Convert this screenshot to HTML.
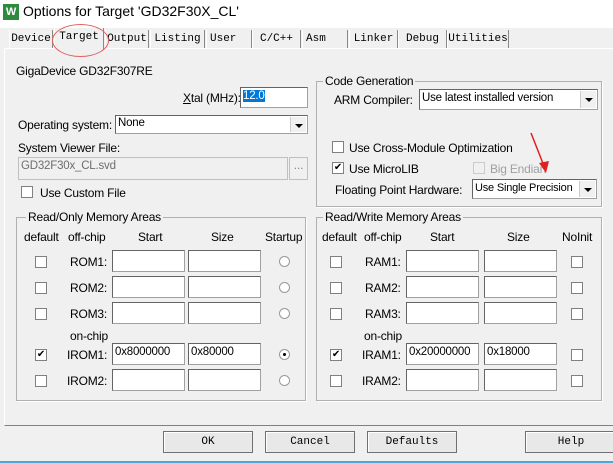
<!DOCTYPE html><html><head><style>
*{box-sizing:border-box;margin:0;padding:0}
body{width:613px;height:463px;background:#f0f0f0;position:relative;overflow:hidden;font:12px "Liberation Sans",sans-serif;color:#000;letter-spacing:-0.2px}
.a{position:absolute;white-space:nowrap}
.t{position:absolute;top:30px;height:18px;font:11px "Liberation Mono",monospace;padding:3px 0 0;text-align:center;border-left:1px solid #fff;border-right:1px solid #888;letter-spacing:0;overflow:hidden}
.in{position:absolute;height:22px;background:#fff;border:1px solid #a0a0a0;border-top-color:#646464;border-left-color:#646464;padding:2px 2px;font-size:11.5px;overflow:hidden;white-space:nowrap}
.cb{position:absolute;width:12px;height:12px;background:#fff;border:1px solid #808080;font-size:10px;line-height:10px;text-align:center}
.rd{position:absolute;width:11px;height:11px;border-radius:50%;background:#fff;border:1px solid #999}
.gb{position:absolute;border:1px solid #b0b0b0;box-shadow:1px 1px 0 #fff}
.gl{position:absolute;background:#f0f0f0;padding:0 2px}
.dd{position:absolute;top:1px;right:1px;width:16px;bottom:1px;background:#f0f0f0;border-left:1px solid #ccc}
.dd:after{content:"";position:absolute;left:4px;top:7px;border:4px solid transparent;border-top:4px solid #000}
.bt{position:absolute;top:431px;height:22px;width:90px;border:1px solid #707070;background:#e8e8e8;font:11px "Liberation Mono",monospace;text-align:center;line-height:20px;box-shadow:inset 1px 1px #fff;letter-spacing:0}
</style></head><body>
<div class="a" style="left:0;top:0;width:613px;height:28px;background:#fff"></div>
<div class="a" style="left:3px;top:4px;width:16px;height:16px;background:#2e8b3e;color:#fff;font:bold 11px sans-serif;text-align:center;line-height:16px">W</div>
<div class="a" style="left:23px;top:3px;font-size:14px;letter-spacing:0">Options for Target 'GD32F30X_CL'</div>
<div class="a" style="left:4px;top:48px;width:610px;height:378px;border:1px solid #fff;border-right:none;border-bottom:1px solid #808080"></div>
<div class="t" style="left:9px;width:44px">Device</div>
<div class="t" style="left:54px;top:28px;height:21px;width:50px;background:#f0f0f0">Target</div>
<div class="t" style="left:105px;width:44px">Output</div>
<div class="t" style="left:150px;width:55px">Listing</div>
<div class="t" style="left:206px;width:46px;text-align:left;padding-left:3px">User</div>
<div class="t" style="left:252px;width:49px">C/C++</div>
<div class="t" style="left:302px;width:46px;text-align:left;padding-left:3px">Asm</div>
<div class="t" style="left:349px;width:49px">Linker</div>
<div class="t" style="left:398px;width:49px">Debug</div>
<div class="t" style="left:447px;width:62px">Utilities</div>
<div class="a" style="left:52px;top:24px;width:57px;height:33px;border:1px solid #e06060;border-radius:50%"></div>

<div class="a" style="left:16px;top:64px">GigaDevice GD32F307RE</div>
<div class="a" style="left:183px;top:91px"><u>X</u>tal (MHz):</div>
<div class="in" style="left:240px;top:87px;width:68px;height:21px"><span style="background:#0078d7;color:#fff">12.0</span></div>
<div class="a" style="left:18px;top:118px">Operating system:</div>
<div class="in" style="left:115px;top:115px;width:193px;height:19px;padding-top:1px">None<div class="dd"></div></div>
<div class="a" style="left:18px;top:141px">System Viewer File:</div>
<div class="in" style="left:18px;top:157px;width:270px;height:23px;background:#f0f0f0;color:#6d6d6d;border-color:#c0c0c0">GD32F30x_CL.svd</div>
<div class="a" style="left:289px;top:157px;width:19px;height:23px;border:1px solid #c0c0c0;color:#888;text-align:center">...</div>
<div class="cb" style="left:21px;top:186px"></div>
<div class="a" style="left:40px;top:186px">Use Custom File</div>

<div class="gb" style="left:16px;top:217px;width:290px;height:184px"></div>
<div class="gl" style="left:26px;top:210px">Read/Only Memory Areas</div>
<div class="a" style="left:24px;top:230px">default</div><div class="a" style="left:68px;top:230px">off-chip</div>
<div class="a" style="left:138px;top:230px">Start</div><div class="a" style="left:211px;top:230px">Size</div><div class="a" style="left:265px;top:230px">Startup</div>

<div class="gb" style="left:316px;top:217px;width:286px;height:184px"></div>
<div class="gl" style="left:323px;top:210px">Read/Write Memory Areas</div>
<div class="a" style="left:322px;top:230px">default</div><div class="a" style="left:364px;top:230px">off-chip</div>
<div class="a" style="left:430px;top:230px">Start</div><div class="a" style="left:507px;top:230px">Size</div><div class="a" style="left:562px;top:230px">NoInit</div>

<div class="a" style="left:70px;top:329px">on-chip</div>
<div class="a" style="left:364px;top:329px">on-chip</div>

<div class="gb" style="left:316px;top:81px;width:286px;height:126px"></div>
<div class="gl" style="left:323px;top:74px">Code Generation</div>
<div class="a" style="left:334px;top:93px">ARM Compiler:</div>
<div class="in" style="left:419px;top:89px;width:179px;height:21px">Use latest installed version<div class="dd"></div></div>
<div class="cb" style="left:332px;top:141px"></div><div class="a" style="left:349px;top:141px">Use Cross-Module Optimization</div>
<div class="cb" style="left:332px;top:162px">✔</div><div class="a" style="left:349px;top:162px">Use MicroLIB</div>
<div class="cb" style="left:473px;top:162px;border-color:#ccc;background:#f0f0f0"></div><div class="a" style="left:490px;top:162px;color:#a0a0a0">Big Endian</div>
<div class="a" style="left:335px;top:183px">Floating Point Hardware:</div>
<div class="in" style="left:472px;top:179px;width:125px;height:20px;padding-top:2px;font-size:11px">Use Single Precision<div class="dd"></div></div>
<svg class="a" style="left:520px;top:130px" width="40" height="45"><line x1="11" y1="3" x2="24" y2="36" stroke="#e02020" stroke-width="1.5"/><polygon points="19,33 29,31 26,43" fill="#e02020"/></svg>

<div id="rows"></div>
<script>
var r=[["ROM1","RAM1",250,"",""],["ROM2","RAM2",276,"",""],["ROM3","RAM3",302,"",""],["IROM1","IRAM1",343,"0x8000000","0x80000","0x20000000","0x18000"],["IROM2","IRAM2",369,"",""]],h="";
r.forEach(function(e,i){var y=e[2],ck=i==3?"✔":"";
h+='<div class="cb" style="left:35px;top:'+(y+6)+'px">'+ck+'</div>';
h+='<div class="a" style="left:'+(e[0].length>4?67:70)+'px;top:'+(y+5)+'px">'+e[0]+':</div>';
h+='<div class="in" style="left:112px;top:'+y+'px;width:73px">'+(e[3]||"")+'</div>';
h+='<div class="in" style="left:188px;top:'+y+'px;width:73px">'+(e[4]||"")+'</div>';
h+='<div class="rd" style="left:279px;top:'+(y+6)+'px">'+(i==3?'<div style="width:3px;height:3px;background:#000;border-radius:50%;margin:3px"></div>':'')+'</div>';
h+='<div class="cb" style="left:330px;top:'+(y+6)+'px">'+ck+'</div>';
h+='<div class="a" style="left:'+(e[1].length>4?362:365)+'px;top:'+(y+5)+'px">'+e[1]+':</div>';
h+='<div class="in" style="left:406px;top:'+y+'px;width:73px">'+(e[5]||"")+'</div>';
h+='<div class="in" style="left:484px;top:'+y+'px;width:73px">'+(e[6]||"")+'</div>';
h+='<div class="cb" style="left:571px;top:'+(y+6)+'px"></div>';});
document.getElementById("rows").innerHTML=h;
</script>
<div class="bt" style="left:163px">OK</div>
<div class="bt" style="left:265px">Cancel</div>
<div class="bt" style="left:367px">Defaults</div>
<div class="bt" style="left:525px;width:92px">Help</div>
<div class="a" style="left:0;top:461px;width:613px;height:2px;background:#4aa8d8"></div>
</body></html>
